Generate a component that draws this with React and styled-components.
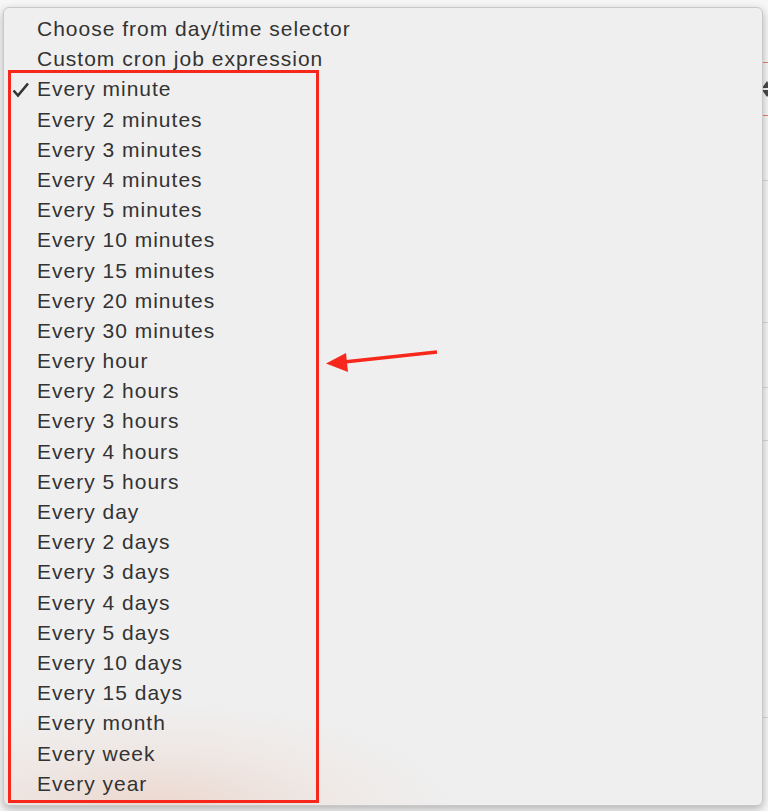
import React from "react";
import styled, { createGlobalStyle } from "styled-components";

const GlobalStyle = createGlobalStyle`
  html, body {
    margin: 0;
    padding: 0;
    background: #f6f6f6;
  }
  body {
    font-family: "Liberation Sans", Arial, sans-serif;
    width: 768px;
    height: 811px;
    overflow: hidden;
  }
`;

const Page = styled.div`
  position: relative;
  width: 768px;
  height: 811px;
  overflow: hidden;
`;

// page content peeking out behind the popup menu
const Backdrop = styled.div`
  display: flex;
  flex-direction: column;
  padding-left: 690px;
`;

const Divider = styled.div`
  height: ${(p) => p.h}px;
  box-sizing: border-box;
  border-bottom: 1px solid ${(p) => (p.accent ? "#ee7b62" : "#d6d6d6")};
  display: flex;
  justify-content: flex-end;
  align-items: center;
`;

const Stepper = styled.span`
  display: flex;
  flex-direction: column;
  gap: 2px;
  margin-right: -4px;
  & > i {
    width: 0;
    height: 0;
    border-left: 5px solid transparent;
    border-right: 5px solid transparent;
  }
  & > i:first-child {
    border-bottom: 7px solid #4a4a4a;
  }
  & > i:last-child {
    border-top: 7px solid #4a4a4a;
  }
`;

const Menu = styled.div`
  position: absolute;
  left: 3px;
  top: 7px;
  width: 760px;
  height: 799px;
  box-sizing: border-box;
  padding-top: 6px;
  border-radius: 6px;
  border: 1px solid #c9c9c9;
  background:
    radial-gradient(ellipse 300px 110px at 150px 805px, rgba(234, 204, 190, 0.7), rgba(238, 220, 212, 0.35) 60%, rgba(239, 239, 239, 0) 100%),
    #efefef;
  box-shadow: 0 3px 8px rgba(0, 0, 0, 0.28);
`;

const Item = styled.div`
  position: relative;
  height: 30.2px;
  line-height: 30.2px;
  padding-left: ${(p) => p.indent}px;
  font-size: 21px;
  letter-spacing: 1px;
  color: #333333;
  white-space: nowrap;
`;

const Check = styled.svg`
  position: absolute;
  left: 1px;
  top: 8px;
`;

const Highlight = styled.div`
  width: 311px;
  margin-left: 4px;
  margin-top: -4px;
  padding: 1px 0;
  box-sizing: border-box;
  border: 3px solid #f7271c;
`;

const Arrow = styled.svg`
  position: absolute;
  left: 320px;
  top: 340px;
`;

const topItems = ["Choose from day/time selector", "Custom cron job expression"];

const intervals = [
  "Every minute",
  "Every 2 minutes",
  "Every 3 minutes",
  "Every 4 minutes",
  "Every 5 minutes",
  "Every 10 minutes",
  "Every 15 minutes",
  "Every 20 minutes",
  "Every 30 minutes",
  "Every hour",
  "Every 2 hours",
  "Every 3 hours",
  "Every 4 hours",
  "Every 5 hours",
  "Every day",
  "Every 2 days",
  "Every 3 days",
  "Every 4 days",
  "Every 5 days",
  "Every 10 days",
  "Every 15 days",
  "Every month",
  "Every week",
  "Every year",
];

export default function App() {
  return (
    <Page>
      <GlobalStyle />
      <Backdrop>
        <Divider h={63} accent />
        <Divider h={53} accent>
          <Stepper>
            <i />
            <i />
          </Stepper>
        </Divider>
        <Divider h={65} />
        <Divider h={142} />
        <Divider h={65} />
        <Divider h={53} />
        <Divider h={277} />
      </Backdrop>

      <Menu>
        {topItems.map((label) => (
          <Item key={label} indent={33}>
            {label}
          </Item>
        ))}
        <Highlight>
          {intervals.map((label, i) => (
            <Item key={label} indent={26}>
              {i === 0 && (
                <Check width="18" height="16" viewBox="0 0 18 16">
                  <path d="M1.5 8.5 L6 13.5 L16 1.5" fill="none" stroke="#333" strokeWidth="2.6" strokeLinejoin="miter" />
                </Check>
              )}
              {label}
            </Item>
          ))}
        </Highlight>
      </Menu>

      <Arrow width="124" height="36" viewBox="0 0 124 36">
        <line x1="117" y1="12" x2="24" y2="22" stroke="#f7271c" strokeWidth="3.4" />
        <polygon points="6,23.5 26,13 28,32" fill="#f7271c" />
      </Arrow>
    </Page>
  );
}
